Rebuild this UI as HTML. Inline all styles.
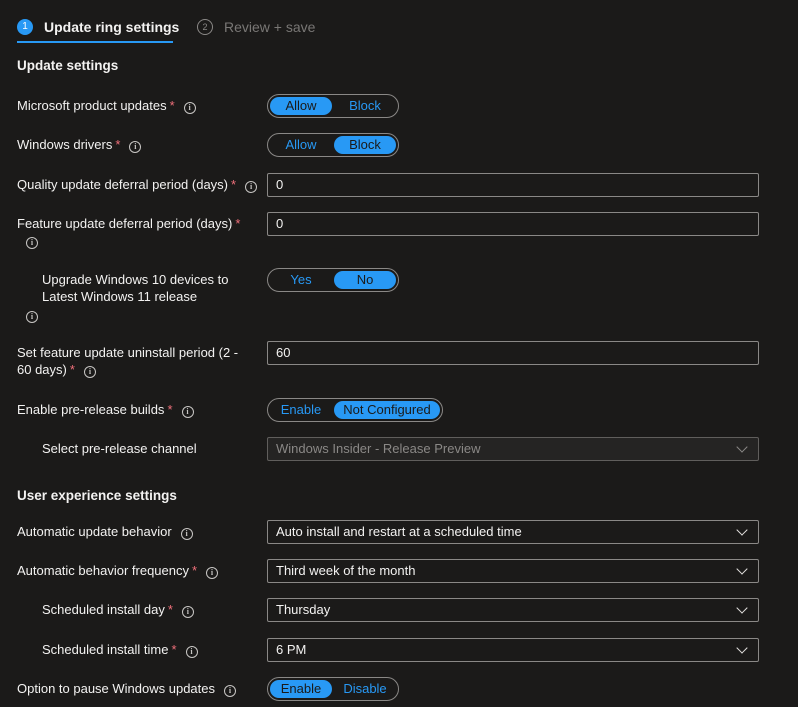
<!DOCTYPE html>
<html><head><meta charset="utf-8"><style>
body{margin:0;width:798px;height:707px;background:#1b1a19;font-family:"Liberation Sans",sans-serif;font-size:13px;color:#f3f2f1;position:relative;overflow:hidden}
.a{position:absolute;white-space:nowrap}
.lbl{position:absolute;line-height:17px}
.req{color:#f1707b;margin-left:3px}
.i{display:inline-block;width:10px;height:10px;border:1px solid #c8c6c4;border-radius:50%;font-size:8px;line-height:10px;text-align:center;color:#c8c6c4;font-weight:bold;vertical-align:-1px;margin-left:9px;font-family:"Liberation Serif",serif;position:relative;top:-1px}
.h{font-weight:bold;font-size:13.5px}
.tg{position:absolute;height:22px;border:1px solid #8a8886;border-radius:12px;box-sizing:content-box}
.tg span{position:absolute;top:2px;height:18px;border-radius:9px;text-align:center;line-height:18px;color:#2899f5}
.tg span.on{background:#2899f5;color:#1b1a19}
.in{position:absolute;left:267px;width:482px;height:22px;border:1px solid #8a8886;border-radius:2px;line-height:22px;padding-left:8px;box-sizing:content-box}
.dd::after{content:"";position:absolute;right:12px;top:5px;width:7px;height:7px;border-right:1px solid #e1dfdd;border-bottom:1px solid #e1dfdd;transform:rotate(45deg)}
.dis{background:#252423;border-color:#605e5c;color:#8a8886}
.dis::after{border-color:#8a8886}
</style></head><body>
<div class="a" style="left:17px;top:19px;width:16px;height:16px;border-radius:50%;background:#2899f5;color:#fff;font-size:10px;text-align:center;line-height:16px">1</div>
<div class="a" style="left:44px;top:19px;font-size:14px;font-weight:bold">Update ring settings</div>
<div class="a" style="left:17px;top:41px;width:156px;height:2px;background:#2899f5"></div>
<div class="a" style="left:197px;top:19px;width:14px;height:14px;border-radius:50%;border:1px solid #8a8886;color:#8a8886;font-size:9px;text-align:center;line-height:14px">2</div>
<div class="a" style="left:224px;top:19px;font-size:14px;color:#797775">Review + save</div>

<div class="a h" style="left:17px;top:58px">Update settings</div>

<div class="lbl" style="left:17px;top:97px">Microsoft product updates<span class="req">*</span><span class="i">i</span></div>
<div class="tg" style="left:267px;top:94px;width:130px"><span class="on" style="left:2px;width:62px">Allow</span><span style="left:66px;width:62px">Block</span></div>

<div class="lbl" style="left:17px;top:136px">Windows drivers<span class="req">*</span><span class="i">i</span></div>
<div class="tg" style="left:267px;top:133px;width:130px"><span style="left:2px;width:62px">Allow</span><span class="on" style="left:66px;width:62px">Block</span></div>

<div class="lbl" style="left:17px;top:176px">Quality update deferral period (days)<span class="req">*</span><span class="i">i</span></div>
<div class="in" style="top:173px">0</div>

<div class="lbl" style="left:17px;top:215px">Feature update deferral period (days)<span class="req">*</span><br><span class="i" style="margin-left:9px">i</span></div>
<div class="in" style="top:212px">0</div>

<div class="lbl" style="left:42px;top:271px">Upgrade Windows 10 devices to<br>Latest Windows 11 release</div>
<div class="lbl" style="left:17px;top:306px"><span class="i">i</span></div>
<div class="tg" style="left:267px;top:268px;width:130px"><span style="left:2px;width:62px">Yes</span><span class="on" style="left:66px;width:62px">No</span></div>

<div class="lbl" style="left:17px;top:344px">Set feature update uninstall period (2 -<br>60 days)<span class="req">*</span><span class="i">i</span></div>
<div class="in" style="top:341px">60</div>

<div class="lbl" style="left:17px;top:401px">Enable pre-release builds<span class="req">*</span><span class="i">i</span></div>
<div class="tg" style="left:267px;top:398px;width:174px"><span style="left:2px;width:62px">Enable</span><span class="on" style="left:66px;width:106px">Not Configured</span></div>

<div class="lbl" style="left:42px;top:440px">Select pre-release channel</div>
<div class="in dd dis" style="top:437px">Windows Insider - Release Preview</div>

<div class="a h" style="left:17px;top:488px">User experience settings</div>

<div class="lbl" style="left:17px;top:523px">Automatic update behavior<span class="i">i</span></div>
<div class="in dd" style="top:520px">Auto install and restart at a scheduled time</div>

<div class="lbl" style="left:17px;top:562px">Automatic behavior frequency<span class="req">*</span><span class="i">i</span></div>
<div class="in dd" style="top:559px">Third week of the month</div>

<div class="lbl" style="left:42px;top:601px">Scheduled install day<span class="req">*</span><span class="i">i</span></div>
<div class="in dd" style="top:598px">Thursday</div>

<div class="lbl" style="left:42px;top:641px">Scheduled install time<span class="req">*</span><span class="i">i</span></div>
<div class="in dd" style="top:638px">6 PM</div>

<div class="lbl" style="left:17px;top:680px">Option to pause Windows updates<span class="i">i</span></div>
<div class="tg" style="left:267px;top:677px;width:130px"><span class="on" style="left:2px;width:62px">Enable</span><span style="left:66px;width:62px">Disable</span></div>
</body></html>
